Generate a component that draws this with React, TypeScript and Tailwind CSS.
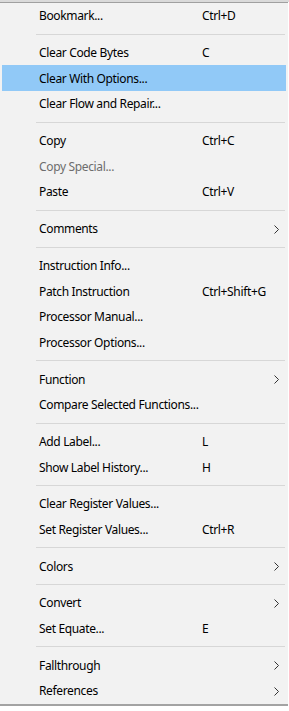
import React from "react";

type Item =
  | { sep: true }
  | { sep?: false; label: string; shortcut?: string; sub?: boolean; disabled?: boolean; active?: boolean };

const items: Item[] = [
  { label: "Bookmark...", shortcut: "Ctrl+D" },
  { sep: true },
  { label: "Clear Code Bytes", shortcut: "C" },
  { label: "Clear With Options...", active: true },
  { label: "Clear Flow and Repair..." },
  { sep: true },
  { label: "Copy", shortcut: "Ctrl+C" },
  { label: "Copy Special...", disabled: true },
  { label: "Paste", shortcut: "Ctrl+V" },
  { sep: true },
  { label: "Comments", sub: true },
  { sep: true },
  { label: "Instruction Info..." },
  { label: "Patch Instruction", shortcut: "Ctrl+Shift+G" },
  { label: "Processor Manual..." },
  { label: "Processor Options..." },
  { sep: true },
  { label: "Function", sub: true },
  { label: "Compare Selected Functions..." },
  { sep: true },
  { label: "Add Label...", shortcut: "L" },
  { label: "Show Label History...", shortcut: "H" },
  { sep: true },
  { label: "Clear Register Values..." },
  { label: "Set Register Values...", shortcut: "Ctrl+R" },
  { sep: true },
  { label: "Colors", sub: true },
  { sep: true },
  { label: "Convert", sub: true },
  { label: "Set Equate...", shortcut: "E" },
  { sep: true },
  { label: "Fallthrough", sub: true },
  { label: "References", sub: true },
];

function Arrow() {
  return (
    <svg width="5" height="9" viewBox="0 0 5 9" className="block">
      <path d="M0.5 0.5 L4.5 4.5 L0.5 8.5" fill="none" stroke="#333" strokeWidth="1" />
    </svg>
  );
}

export default function App() {
  return (
    <div className="w-[289px] h-[711px] bg-white" style={{ fontFamily: '"Noto Sans", "Liberation Sans", sans-serif' }}>
      <div className="h-[2px] bg-[#dadada]" />
      <div className="border-t border-[#a0a0a0] border-b-2 border-b-[#a3a3a3] bg-[#f2f2f2] px-[2px] w-[288px]">
        {items.map((it, i) =>
          it.sep ? (
            <div key={i} className="h-[11px] flex items-center pl-[34px] pr-[1px]">
              <div className="h-px w-full bg-[#d7d7d7]" />
            </div>
          ) : (
            <div
              key={i}
              className={
                "h-[25.7px] flex items-center text-[12px] tracking-[-0.35px] leading-none pt-[1px] " +
                (it.active ? "bg-[#91c9f7] " : "") +
                (it.disabled ? "text-[#6d6d6d]" : "text-black")
              }
            >
              <div className="pl-[37px] w-[200px] whitespace-nowrap">{it.label}</div>
              <div className="flex-1 whitespace-nowrap">{it.shortcut ?? ""}</div>
              <div className="w-[12px] flex justify-start">{it.sub ? <Arrow /> : null}</div>
            </div>
          )
        )}
      </div>
    </div>
  );
}
